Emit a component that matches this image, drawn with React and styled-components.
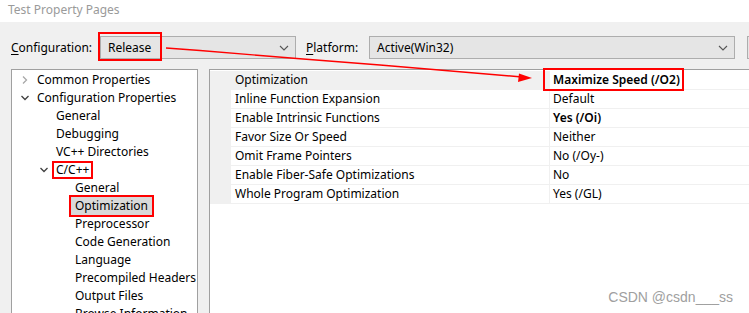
import React from "react";
import styled, { createGlobalStyle } from "styled-components";

const GlobalStyle = createGlobalStyle`
  html, body {
    margin: 0;
    padding: 0;
    background: #f0f0f0;
  }
`;

const UI_FONT = `"Noto Sans", "Open Sans", sans-serif`;

const treeData = [
  { label: "Common Properties", level: 0, expanded: false },
  { label: "Configuration Properties", level: 0, expanded: true },
  { label: "General", level: 1 },
  { label: "Debugging", level: 1 },
  { label: "VC++ Directories", level: 1 },
  { label: "C/C++", level: 1, expanded: true, marked: true },
  { label: "General", level: 2 },
  { label: "Optimization", level: 2, selected: true, marked: true },
  { label: "Preprocessor", level: 2 },
  { label: "Code Generation", level: 2 },
  { label: "Language", level: 2 },
  { label: "Precompiled Headers", level: 2 },
  { label: "Output Files", level: 2 },
  { label: "Browse Information", level: 2 },
];

const props = [
  { name: "Optimization", value: "Maximize Speed (/O2)", bold: true, selected: true },
  { name: "Inline Function Expansion", value: "Default" },
  { name: "Enable Intrinsic Functions", value: "Yes (/Oi)", bold: true },
  { name: "Favor Size Or Speed", value: "Neither" },
  { name: "Omit Frame Pointers", value: "No (/Oy-)" },
  { name: "Enable Fiber-Safe Optimizations", value: "No" },
  { name: "Whole Program Optimization", value: "Yes (/GL)" },
];

const Chevron = ({ open }) =>
  open ? (
    <svg width="10" height="10" viewBox="0 0 10 10">
      <polyline points="1.5,3 5,6.5 8.5,3" fill="none" stroke="#404040" strokeWidth="1.3" />
    </svg>
  ) : (
    <svg width="10" height="10" viewBox="0 0 10 10">
      <polyline points="3,1.5 6.5,5 3,8.5" fill="none" stroke="#a8a8a8" strokeWidth="1.3" />
    </svg>
  );

const ComboArrow = () => (
  <svg width="10" height="6" viewBox="0 0 10 6">
    <polyline points="1,1 5,5 9,1" fill="none" stroke="#555" strokeWidth="1.1" />
  </svg>
);

export default function App() {
  return (
    <Page>
      <GlobalStyle />
      <TitleBar>Test Property Pages</TitleBar>

      <ConfigBar>
        <FieldLabel width={89}>
          <u>C</u>onfiguration:
        </FieldLabel>
        <Combo width={196}>
          <ComboText>Release</ComboText>
          <Callout />
          <ComboArrow />
        </Combo>
        <FieldLabel width={63} gap={10}>
          <u>P</u>latform:
        </FieldLabel>
        <Combo width={366}>
          <ComboText>Active(Win32)</ComboText>
          <ComboArrow />
        </Combo>
        <SideButton />
      </ConfigBar>

      <Content>
        <TreePanel>
          {treeData.map((item, i) => (
            <TreeRow key={i} level={item.level}>
              <Toggle>
                {item.expanded !== undefined && <Chevron open={item.expanded} />}
              </Toggle>
              <TreeLabel
                marked={item.marked}
                selected={item.selected}
              >
                {item.label}
              </TreeLabel>
            </TreeRow>
          ))}
        </TreePanel>

        <GridPanel>
          {props.map((p) => (
            <PropRow key={p.name}>
              <Stripe />
              <NameCell selected={p.selected}>{p.name}</NameCell>
              <ValueCell bold={p.bold}>
                {p.selected ? <MarkedValue>{p.value}</MarkedValue> : p.value}
              </ValueCell>
            </PropRow>
          ))}
        </GridPanel>
      </Content>

      <Annotation width="749" height="313" viewBox="0 0 749 313">
        <polyline
          points="166,48 200,50.5 300,58.8 380,65 522,77"
          fill="none"
          stroke="#ff0000"
          strokeWidth="1.4"
        />
        <polygon points="519,73.5 532,78 518,82" fill="#ff0000" />
      </Annotation>

      <Watermark>CSDN @csdn___ss</Watermark>
    </Page>
  );
}

const Page = styled.div`
  position: relative;
  width: 749px;
  height: 313px;
  overflow: hidden;
  background: #f0f0f0;
  font-family: ${UI_FONT};
  font-size: 12px;
  color: #000;
`;

const TitleBar = styled.div`
  height: 22px;
  padding-left: 8px;
  background: #fff;
  color: #9a9a9a;
  line-height: 20px;
`;

const ConfigBar = styled.div`
  display: flex;
  align-items: center;
  height: 23px;
  margin-top: 14px;
  padding-left: 11px;
`;

const FieldLabel = styled.label`
  flex: none;
  width: ${(p) => p.width}px;
  margin-left: ${(p) => p.gap || 0}px;
  line-height: 23px;

  u {
    text-decoration-thickness: 1px;
    text-underline-offset: 2px;
  }
`;

const Combo = styled.div`
  position: relative;
  flex: none;
  display: flex;
  align-items: center;
  box-sizing: border-box;
  width: ${(p) => p.width}px;
  height: 23px;
  padding: 0 6px 0 7px;
  background: #e5e5e5;
  border: 1px solid #adadad;
`;

const ComboText = styled.span`
  flex: 1;
`;

const Callout = styled.span`
  position: absolute;
  left: -3px;
  top: -5px;
  width: 60px;
  height: 25px;
  border: 2px solid #ff0000;
`;

const SideButton = styled.div`
  flex: none;
  width: 20px;
  height: 23px;
  margin-left: 12px;
  box-sizing: border-box;
  background: #e5e5e5;
  border: 1px solid #adadad;
`;

const Content = styled.div`
  display: flex;
  gap: 11px;
  margin-top: 10px;
  padding-left: 11px;
  height: 260px;
`;

const TreePanel = styled.div`
  flex: none;
  box-sizing: border-box;
  width: 187px;
  padding-top: 1px;
  background: #fff;
  border: 1px solid #a0a0a0;
  overflow: hidden;
  white-space: nowrap;
`;

const TreeRow = styled.div`
  display: flex;
  align-items: center;
  height: 18px;
  padding-left: ${(p) => p.level * 19}px;
`;

const Toggle = styled.span`
  flex: none;
  display: flex;
  align-items: center;
  width: 25px;
  height: 18px;
  padding-left: 8px;
  box-sizing: border-box;
`;

const TreeLabel = styled.span`
  line-height: ${(p) => (p.selected ? 18 : 14)}px;
  background: ${(p) => (p.selected ? "#d9d9d9" : "transparent")};
  border: ${(p) => (p.marked ? "2px solid #ff0000" : "none")};
  padding: 0 ${(p) => (p.selected ? 4 : p.marked ? 2 : 0)}px;
  margin-left: ${(p) => (p.selected ? -6 : p.marked ? -4 : 0)}px;
`;

const GridPanel = styled.div`
  flex: none;
  width: 560px;
  padding-top: 1px;
  background: #fff;
  border: 1px solid #a0a0a0;
  border-right: none;
  white-space: nowrap;
`;

const PropRow = styled.div`
  display: grid;
  grid-template-columns: 21px 319px 1fr;
  height: 19px;
  line-height: 18px;
`;

const Stripe = styled.div`
  background: #f0f0f0;
`;

const NameCell = styled.div`
  padding-left: 4px;
  background: ${(p) => (p.selected ? "#f0f0f0" : "#fff")};
  border-right: 1px solid #f0f0f0;
  border-bottom: 1px solid #f0f0f0;
`;

const ValueCell = styled.div`
  padding-left: 3px;
  font-weight: ${(p) => (p.bold ? 600 : 400)};
  border-bottom: 1px solid #f0f0f0;
`;

const MarkedValue = styled.span`
  position: relative;

  &::after {
    content: "";
    position: absolute;
    left: -10px;
    right: -4px;
    top: -3px;
    bottom: -3px;
    border: 2px solid #ff0000;
  }
`;

const Annotation = styled.svg`
  position: absolute;
  left: 0;
  top: 0;
  pointer-events: none;
`;

const Watermark = styled.div`
  position: absolute;
  right: 16px;
  bottom: 8px;
  font-family: "Liberation Sans", Arial, sans-serif;
  font-size: 14px;
  color: #a0a0a0;
`;
